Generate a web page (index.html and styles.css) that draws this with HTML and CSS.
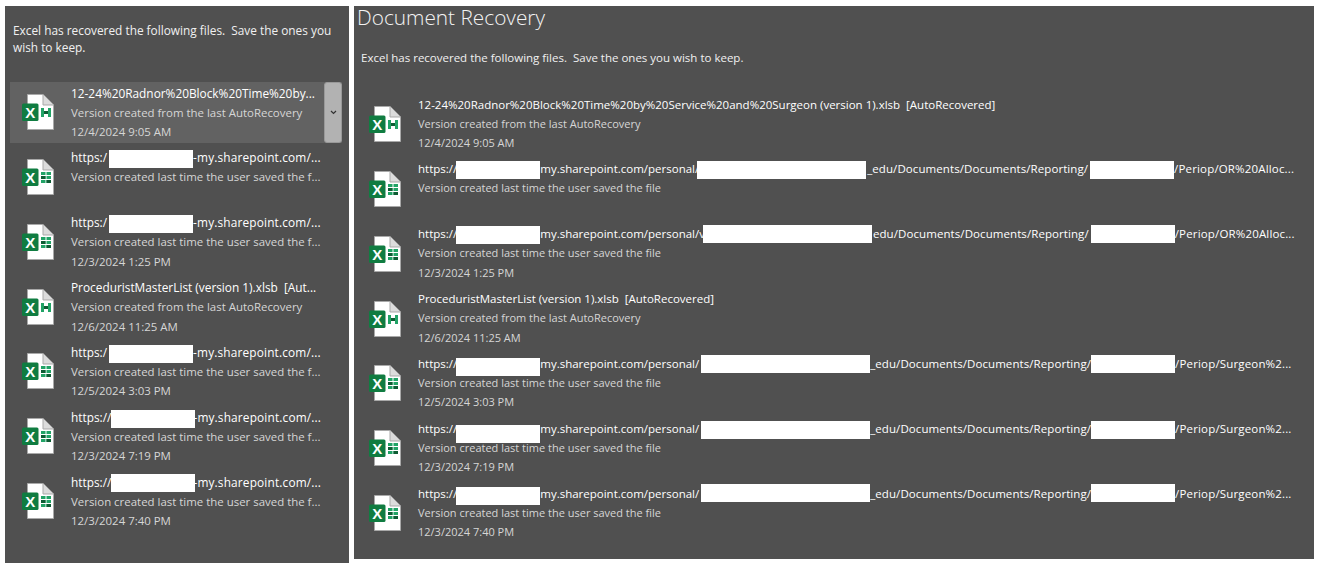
FILE: index.html
```html
<!DOCTYPE html>
<html lang="en">
<head>
<meta charset="utf-8">
<title>Document Recovery</title>
<link rel="stylesheet" href="styles.css">
</head>
<body>
<svg class="defs" aria-hidden="true">
  <symbol id="doc" viewBox="0 0 32 36">
    <path d="M5.5.5H21L31.500 11V35.500H5.500Z" fill="#fff" stroke="#a9a9a9"/>
    <path d="M21 .5V11H31.500" fill="#dcdcdc" stroke="#a9a9a9"/>
    <rect x="0" y="9.500" width="16.500" height="17.500" rx="1.500" fill="#107c41"/>
    <text x="8.200" y="23.500" class="x-mark">X</text>
  </symbol>
  <symbol id="xlsb" viewBox="0 0 32 36">
    <use href="#doc"/>
    <path d="M19 14h3v3h4v-3h3v9h-3v-3h-4v3h-3Z" fill="#21a366"/>
    <rect x="22" y="17" width="4" height="3" fill="#0d5c33"/>
  </symbol>
  <symbol id="xlsx" viewBox="0 0 32 36">
    <use href="#doc"/>
    <path d="M19 13h4.500v3H19ZM24.500 13H29v3h-4.500ZM19 17h4.500v3H19ZM24.500 17H29v3h-4.500ZM19 21h4.500v3H19ZM24.500 21H29v3h-4.500Z" fill="#21a366"/>
    <path d="M19 17h4.500v3H19ZM24.500 21H29v3h-4.500Z" fill="#0d5c33"/>
  </symbol>
</svg>
<main class="page">
  <section class="panel panel-narrow">
    <p class="intro">Excel has recovered the following files.&nbsp; Save the ones you wish to keep.</p>
    <ul class="files">
      <li class="file selected">
        <svg class="icon"><use href="#xlsb"/></svg>
        <div class="info">
          <div class="name">12-24%20Radnor%20Block%20Time%20by...</div>
          <div class="sub">Version created from the last AutoRecovery</div>
          <div class="sub">12/4/2024 9:05 AM</div>
        </div>
        <button class="drop" type="button" aria-label="More">
          <svg width="7" height="5" viewBox="0 0 7 5"><path d="M1 1l2.500 2.500L6 1" fill="none" stroke="#333" stroke-width="1.200"/></svg>
        </button>
      </li>
      <li class="file">
        <svg class="icon"><use href="#xlsx"/></svg>
        <div class="info">
          <div class="name">https:/<span class="mask host"></span><span class="tail">-my.sharepoint.com/...</span></div>
          <div class="sub">Version created last time the user saved the f...</div>
        </div>
      </li>
      <li class="file">
        <svg class="icon"><use href="#xlsx"/></svg>
        <div class="info">
          <div class="name">https:/<span class="mask host"></span><span class="tail">-my.sharepoint.com/...</span></div>
          <div class="sub">Version created last time the user saved the f...</div>
          <div class="sub">12/3/2024 1:25 PM</div>
        </div>
      </li>
      <li class="file">
        <svg class="icon"><use href="#xlsb"/></svg>
        <div class="info">
          <div class="name">ProceduristMasterList (version 1).xlsb&nbsp; [Aut...</div>
          <div class="sub">Version created from the last AutoRecovery</div>
          <div class="sub">12/6/2024 11:25 AM</div>
        </div>
      </li>
      <li class="file">
        <svg class="icon"><use href="#xlsx"/></svg>
        <div class="info">
          <div class="name">https:/<span class="mask host"></span><span class="tail">-my.sharepoint.com/...</span></div>
          <div class="sub">Version created last time the user saved the f...</div>
          <div class="sub">12/5/2024 3:03 PM</div>
        </div>
      </li>
      <li class="file">
        <svg class="icon"><use href="#xlsx"/></svg>
        <div class="info">
          <div class="name">https://<span class="mask host nudged"></span><span class="tail">-my.sharepoint.com/...</span></div>
          <div class="sub">Version created last time the user saved the f...</div>
          <div class="sub">12/3/2024 7:19 PM</div>
        </div>
      </li>
      <li class="file">
        <svg class="icon"><use href="#xlsx"/></svg>
        <div class="info">
          <div class="name">https://<span class="mask host nudged"></span><span class="tail">-my.sharepoint.com/...</span></div>
          <div class="sub">Version created last time the user saved the f...</div>
          <div class="sub">12/3/2024 7:40 PM</div>
        </div>
      </li>
    </ul>
  </section>
  <section class="panel panel-wide">
    <h1 class="heading">Document Recovery</h1>
    <p class="intro">Excel has recovered the following files.&nbsp; Save the ones you wish to keep.</p>
    <ul class="files">
      <li class="file">
        <svg class="icon"><use href="#xlsb"/></svg>
        <div class="info">
          <div class="name">12-24%20Radnor%20Block%20Time%20by%20Service%20and%20Surgeon (version 1).xlsb&nbsp; [AutoRecovered]</div>
          <div class="sub">Version created from the last AutoRecovery</div>
          <div class="sub">12/4/2024 9:05 AM</div>
        </div>
      </li>
      <li class="file">
        <svg class="icon"><use href="#xlsx"/></svg>
        <div class="info">
          <div class="name">https://<span class="mask host"></span>my.sharepoint.com/personal/<span class="mask user over-slash"></span><span class="path gap-o">_edu/Documents/Documents/Reporting/</span><span class="mask host third"></span><span class="tail">/Periop/OR%20Alloc...</span></div>
          <div class="sub">Version created last time the user saved the file</div>
        </div>
      </li>
      <li class="file">
        <svg class="icon"><use href="#xlsx"/></svg>
        <div class="info">
          <div class="name">https://<span class="mask host"></span>my.sharepoint.com/personal/v<span class="mask user over-v up1"></span><span class="path gap-e">edu/Documents/Documents/Reporting/</span><span class="mask host third up1"></span><span class="tail">/Periop/OR%20Alloc...</span></div>
          <div class="sub">Version created last time the user saved the file</div>
          <div class="sub">12/3/2024 1:25 PM</div>
        </div>
      </li>
      <li class="file">
        <svg class="icon"><use href="#xlsb"/></svg>
        <div class="info">
          <div class="name">ProceduristMasterList (version 1).xlsb&nbsp; [AutoRecovered]</div>
          <div class="sub">Version created from the last AutoRecovery</div>
          <div class="sub">12/6/2024 11:25 AM</div>
        </div>
      </li>
      <li class="file">
        <svg class="icon"><use href="#xlsx"/></svg>
        <div class="info">
          <div class="name">https://<span class="mask host dn2"></span>my.sharepoint.com/personal/<span class="mask user after-slash up1"></span><span class="path">_edu/Documents/Documents/Reporting/</span><span class="mask host up1 flush"></span><span class="tail">/Periop/Surgeon%2...</span></div>
          <div class="sub">Version created last time the user saved the file</div>
          <div class="sub">12/5/2024 3:03 PM</div>
        </div>
      </li>
      <li class="file">
        <svg class="icon"><use href="#xlsx"/></svg>
        <div class="info">
          <div class="name">https://<span class="mask host dn4"></span>my.sharepoint.com/personal/<span class="mask user after-slash"></span><span class="path">_edu/Documents/Documents/Reporting/</span><span class="mask host flush"></span><span class="tail">/Periop/Surgeon%2...</span></div>
          <div class="sub">Version created last time the user saved the file</div>
          <div class="sub">12/3/2024 7:19 PM</div>
        </div>
      </li>
      <li class="file">
        <svg class="icon"><use href="#xlsx"/></svg>
        <div class="info">
          <div class="name">https://<span class="mask host dn2"></span>my.sharepoint.com/personal/<span class="mask user after-slash up1"></span><span class="path">_edu/Documents/Documents/Reporting/</span><span class="mask host up1 flush"></span><span class="tail">/Periop/Surgeon%2...</span></div>
          <div class="sub">Version created last time the user saved the file</div>
          <div class="sub">12/3/2024 7:40 PM</div>
        </div>
      </li>
    </ul>
  </section>
</main>
</body>
</html>
```
FILE: styles.css
```css
* { box-sizing: border-box; }
html, body { margin: 0; padding: 0; background: #fff; overflow: hidden; }
body { font-family: "Open Sans", "Noto Sans", "Liberation Sans", sans-serif; color: #fff; }
.defs { display: none; }
.x-mark { font-family: "Liberation Sans", sans-serif; font-weight: 700; font-size: 15px; fill: #fff; text-anchor: middle; }
.page { display: flex; gap: 5px; align-items: flex-start; padding: 6px 0 0 5px; height: 563px; }
.panel { background: #505050; }
.panel-narrow { width: 344px; height: 557px; padding: 15px 0 0 5px; }
.panel-wide { width: 960px; height: 553px; padding: 0 0 0 5px; }
.heading { margin: -1px 0 0 -2px; font-size: 20.800px; line-height: 25px; font-weight: 300; color: #f4f4f4; }
.intro { margin: 0; color: #f0f0f0; }
.panel-narrow .intro { font-size: 11.850px; line-height: 17.400px; padding: 1px 0 0 3px; height: 61px; width: 335px; }
.panel-wide .intro { font-size: 11.500px; line-height: 18px; padding: 19px 0 0 2px; height: 63px; }
.files { list-style: none; margin: 0; padding: 0; }
.file { display: flex; height: 64.850px; align-items: flex-start; }
.panel-narrow .file { width: 332px; }
.selected { background: #626262; height: 61px; margin-bottom: 3.850px; }
.icon { width: 32px; height: 36px; flex: none; margin: 12px 17px 0 12px; }
.panel-wide .icon { margin: 13px 17px 0 10px; }
.info { flex: 1; min-width: 0; padding-top: 1.500px; white-space: nowrap; }
.name { line-height: 19px; color: #fff; font-size: 11.500px; }
.sub { line-height: 19.500px; color: #d6d6d6; font-size: 11px; }
.panel-narrow .name { font-size: 11.850px; }
.panel-narrow .sub { font-size: 11.450px; }
.mask { display: inline-block; background: #fff; height: 18px; margin-top: -3px; margin-bottom: -3px; vertical-align: middle; }
.host { width: 84px; margin-left: 2px; }
.nudged { margin-left: 0; margin-right: -2px; }
.panel-wide .host { margin-left: -1px; }
.panel-wide .third { margin-left: 2px; }
.panel-wide .flush { margin-left: 0; }
.user { width: 169px; }
.over-slash { margin-left: -2px; }
.over-v { margin-left: -2px; }
.after-slash { margin-left: 2px; }
.tail { letter-spacing: 0.160px; }
.path { letter-spacing: 0.080px; }
.gap-o { margin-left: 1px; }
.gap-e { margin-left: 1px; }
.up1 { transform: translateY(-1px); }
.dn2 { transform: translateY(2px); }
.dn4 { transform: translateY(4px); }
.drop { flex: none; width: 18px; height: 61px; padding: 0; border: 1px solid #999; border-radius: 3px; background: #b2b2b2; display: flex; align-items: center; justify-content: center; }
```
